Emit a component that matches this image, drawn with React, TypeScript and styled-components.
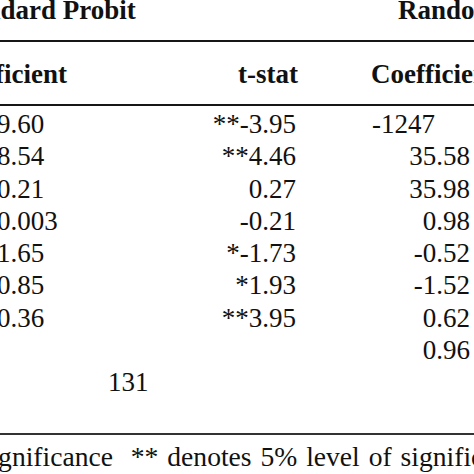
import React from 'react'
import styled, { createGlobalStyle, css } from 'styled-components'

const GlobalStyle = createGlobalStyle`
  html, body {
    margin: 0;
    padding: 0;
    background: #ffffff;
  }
  body {
    font-family: 'Liberation Serif', 'Times New Roman', serif;
    color: #111111;
  }
`

const Frame = styled.div`
  width: 474px;
  height: 474px;
  overflow: hidden;
  background: #ffffff;
`

// The table is wider than the frame; the frame crops it on both sides.
const Sheet = styled.div`
  width: 774px;
  margin-left: -100px;
  margin-top: -5px;
  font-size: 27px;
`

const Grid = styled.div`
  display: grid;
  grid-template-columns: 170px 230px 174px 200px;
`

const GroupRow = styled(Grid)`
  line-height: 30px;
  padding-bottom: 15px;
  border-bottom: 2px solid #161616;
  font-weight: 700;
`

const Group = styled.div<{ $inset: number }>(
  ({ $inset }) => css`
    grid-column: span 2;
    padding-left: ${$inset}px;
    white-space: nowrap;
  `,
)

const HeadRow = styled(Grid)`
  line-height: 30px;
  padding-top: 17px;
  padding-bottom: 15px;
  border-bottom: 2px solid #161616;
  font-weight: 700;
`

const Head = styled.div<{ $align: 'left' | 'right'; $pad: number }>(
  ({ $align, $pad }) => css`
    text-align: ${$align};
    white-space: nowrap;
    ${$align === 'left' ? `padding-left: ${$pad}px;` : `padding-right: ${$pad}px;`}
  `,
)

const Body = styled.div`
  padding-top: 2px;
  padding-bottom: 34px;
  border-bottom: 2px solid #333333;
`

const DataRow = styled(Grid)`
  line-height: 32.3px;
`

const Cell = styled.div<{ $align: 'left' | 'right'; $pad: number }>(
  ({ $align, $pad }) => css`
    text-align: ${$align};
    white-space: nowrap;
    ${$align === 'left' ? `padding-left: ${$pad}px;` : `padding-right: ${$pad}px;`}
  `,
)

const Footer = styled.div`
  display: flex;
  font-size: 27.6px;
  line-height: 30px;
  padding-top: 7px;
  white-space: pre;
`

const FootLead = styled.div`
  width: 213px;
  flex: none;
  display: flex;
  justify-content: flex-end;
`

const FootRest = styled.span`
  word-spacing: 2px;
`

type Row = {
  std: string
  stdT: string
  re: string
  rePad?: number
}

const rows: Row[] = [
  { std: '9.60', stdT: '**-3.95', re: '-1247', rePad: 39 },
  { std: '8.54', stdT: '**4.46', re: '35.58' },
  { std: '0.21', stdT: '0.27', re: '35.98' },
  { std: '0.003', stdT: '-0.21', re: '0.98' },
  { std: '1.65', stdT: '*-1.73', re: '-0.52' },
  { std: '0.85', stdT: '*1.93', re: '-1.52' },
  { std: '0.36', stdT: '**3.95', re: '0.62' },
  { std: '', stdT: '', re: '0.96' },
]

export default function App() {
  return (
    <Frame>
      <GlobalStyle />
      <Sheet>
        <GroupRow>
          <Group $inset={48}>Standard Probit</Group>
          <Group $inset={98}>Random Effects Probit</Group>
        </GroupRow>
        <HeadRow>
          <Head $align="right" $pad={3}>Coefficient</Head>
          <Head $align="right" $pad={2}>t-stat</Head>
          <Head $align="left" $pad={71}>Coefficient</Head>
          <Head $align="left" $pad={40}>t-stat</Head>
        </HeadRow>
        <Body>
          {rows.map((r, i) => (
            <DataRow key={i}>
              <Cell $align="left" $pad={97}>{r.std}</Cell>
              <Cell $align="right" $pad={4}>{r.stdT}</Cell>
              <Cell $align="right" $pad={r.rePad ?? 4}>{r.re}</Cell>
              <Cell $align="left" $pad={40} />
            </DataRow>
          ))}
          <DataRow>
            <Cell $align="left" $pad={0} />
            <Cell $align="left" $pad={38}>131</Cell>
            <Cell $align="right" $pad={4} />
            <Cell $align="left" $pad={40} />
          </DataRow>
        </Body>
        <Footer>
          <FootLead>* denotes 10% level of significance</FootLead>
          <FootRest>{'  ** denotes 5% level of significance'}</FootRest>
        </Footer>
      </Sheet>
    </Frame>
  )
}
